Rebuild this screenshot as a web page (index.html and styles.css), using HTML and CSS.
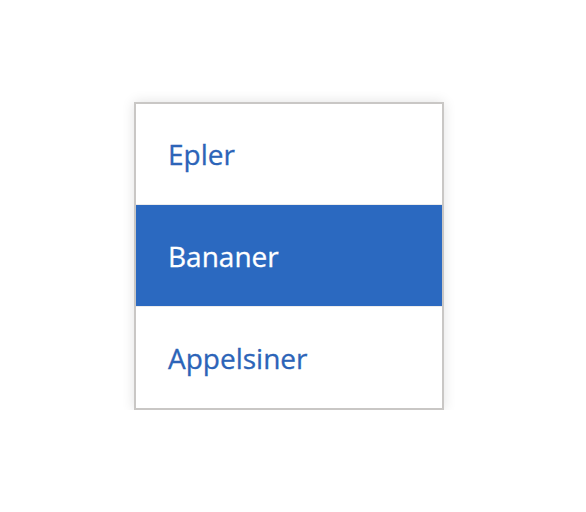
FILE: index.html
```html
<!DOCTYPE html>
<html lang="no">
<head>
  <meta charset="UTF-8">
  <title>Frukt</title>
  <link rel="stylesheet" href="styles.css">
</head>
<body>
  <ul class="listbox">
    <li class="option">Epler</li>
    <li class="option selected">Bananer</li>
    <li class="option">Appelsiner</li>
  </ul>
</body>
</html>
```

FILE: styles.css
```css
body {
  margin: 0;
  background: #ffffff;
  font-family: "Open Sans", "Noto Sans", sans-serif;
}

.listbox {
  list-style: none;
  margin: 102px 0 0 134px;
  padding: 0;
  width: 306px;
  border: 2px solid #c9c7c5;
  box-shadow: 0 0 12px rgba(0, 0, 0, 0.12);
  background: #ffffff;
}

.option {
  box-sizing: border-box;
  height: 101px;
  display: flex;
  align-items: center;
  padding-left: 32px;
  font-size: 28px;
  color: #2c64b8;
  border-bottom: 1px solid #ececec;
  -webkit-text-stroke: 0.3px currentColor;
}

.option:last-child {
  border-bottom: none;
}

.option.selected {
  height: 102px;
  background: #2b69c0;
  color: #ffffff;
}
```
